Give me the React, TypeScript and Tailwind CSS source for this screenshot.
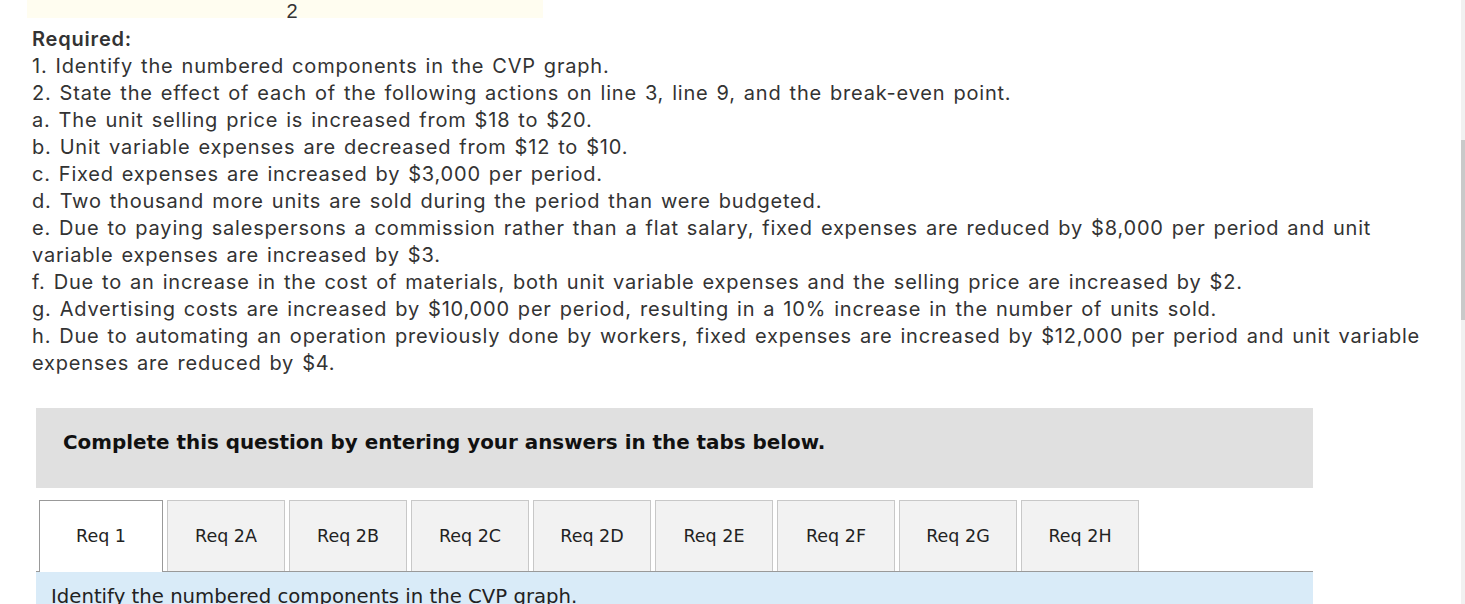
import React from 'react';

const lines: React.ReactNode[] = [
  '1. Identify the numbered components in the CVP graph.',
  '2. State the effect of each of the following actions on line 3, line 9, and the break-even point.',
  'a. The unit selling price is increased from $18 to $20.',
  'b. Unit variable expenses are decreased from $12 to $10.',
  'c. Fixed expenses are increased by $3,000 per period.',
  'd. Two thousand more units are sold during the period than were budgeted.',
  <>
    e. Due to paying salespersons a commission rather than a flat salary, fixed expenses are reduced by $8,000 per period and unit
    <br />
    variable expenses are increased by $3.
  </>,
  'f. Due to an increase in the cost of materials, both unit variable expenses and the selling price are increased by $2.',
  'g. Advertising costs are increased by $10,000 per period, resulting in a 10% increase in the number of units sold.',
  <>
    h. Due to automating an operation previously done by workers, fixed expenses are increased by $12,000 per period and unit variable
    <br />
    expenses are reduced by $4.
  </>,
];

const tabs = ['Req 1', 'Req 2A', 'Req 2B', 'Req 2C', 'Req 2D', 'Req 2E', 'Req 2F', 'Req 2G', 'Req 2H'];

export default function App() {
  return (
    <div className="relative h-[604px] w-full overflow-hidden bg-white">
      {/* top strip with graph label */}
      <div className="ml-[27px] flex h-[18px] w-[516px] items-end justify-center bg-[#fffdf0] pl-[14px]">
        <span className="-mb-[3px] text-[20px] leading-none text-[#333] font-['Liberation_Sans',sans-serif]">2</span>
      </div>

      {/* question text */}
      <div className="mt-[8px] pl-[32px] whitespace-nowrap text-[20px] leading-[27px] tracking-[0.8px] [word-spacing:1.6px] text-[#333] font-['Inter',sans-serif]">
        <div className="font-semibold">Required:</div>
        {lines.map((l, i) => (
          <div key={i}>{l}</div>
        ))}
      </div>

      {/* answer area */}
      <div className="ml-[36px] mt-[31px] w-[1277px] font-['DejaVu_Sans',Verdana,sans-serif]">
        <div className="h-[80px] bg-[#e0e0e0] pl-[27px] pt-[20px] text-[19.9px] font-bold text-[#111]">
          Complete this question by entering your answers in the tabs below.
        </div>

        <div className="mt-[12px] flex gap-[4px] pl-[3px]">
          {tabs.map((t, i) => (
            <div
              key={t}
              className={
                i === 0
                  ? 'relative z-10 -mb-px flex h-[72px] w-[124px] items-center justify-center border border-b-0 border-[#999] bg-white text-[17.5px] text-[#222]'
                  : 'flex h-[71px] w-[118px] items-center justify-center border border-b-0 border-[#c8c8c8] bg-[#f2f2f2] text-[17.5px] text-[#222]'
              }
            >
              {t}
            </div>
          ))}
        </div>

        <div className="h-[40px] border-t border-[#999] bg-[#d9ebf8] pl-[15px] pt-[13px] text-[19.7px] leading-[24px] text-[#222]">
          Identify the numbered components in the CVP graph.
        </div>
      </div>

      {/* browser scrollbar */}
      <div className="absolute right-0 top-0 h-full w-[4px] bg-[#f1f1f1]">
        <div className="mt-[140px] h-[180px] w-full bg-[#c9c9c9]" />
      </div>
    </div>
  );
}
